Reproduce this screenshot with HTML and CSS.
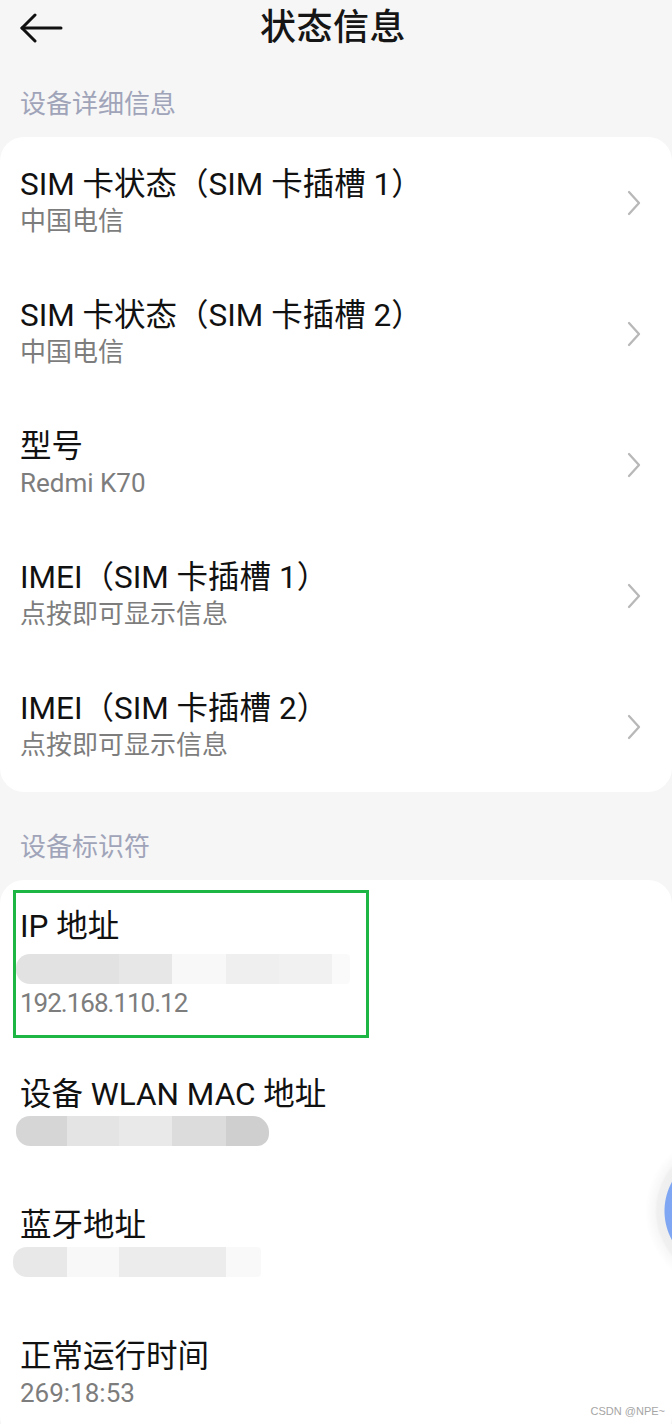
FILE: index.html
```html
<!DOCTYPE html>
<html lang="zh-CN">
<head>
<meta charset="utf-8">
<title>状态信息</title>
<link rel="stylesheet" href="styles.css">
</head>
<body>
<div class="page">
  <header class="topbar">
    <div class="back">
      <svg width="44" height="30" viewBox="0 0 44 30" fill="none" stroke="#111" stroke-width="3" stroke-linecap="round" stroke-linejoin="round">
        <path d="M3 15 H42"/>
        <path d="M16 2 L3 15 L16 28"/>
      </svg>
    </div>
    <h1 class="title">状态信息</h1>
    <div></div>
  </header>

  <div class="section-label">设备详细信息</div>
  <section class="card">
    <div class="item">
      <div class="text"><div class="item-title">SIM 卡状态（SIM 卡插槽 1）</div><div class="item-sub">中国电信</div></div>
      <svg class="chev" width="14" height="26" viewBox="0 0 14 26" fill="none" stroke="#b8b8b8" stroke-width="2.3" stroke-linecap="round" stroke-linejoin="round"><path d="M2 2 L12 13 L2 24"/></svg>
    </div>
    <div class="item">
      <div class="text"><div class="item-title">SIM 卡状态（SIM 卡插槽 2）</div><div class="item-sub">中国电信</div></div>
      <svg class="chev" width="14" height="26" viewBox="0 0 14 26" fill="none" stroke="#b8b8b8" stroke-width="2.3" stroke-linecap="round" stroke-linejoin="round"><path d="M2 2 L12 13 L2 24"/></svg>
    </div>
    <div class="item">
      <div class="text"><div class="item-title">型号</div><div class="item-sub">Redmi K70</div></div>
      <svg class="chev" width="14" height="26" viewBox="0 0 14 26" fill="none" stroke="#b8b8b8" stroke-width="2.3" stroke-linecap="round" stroke-linejoin="round"><path d="M2 2 L12 13 L2 24"/></svg>
    </div>
    <div class="item">
      <div class="text"><div class="item-title">IMEI（SIM 卡插槽 1）</div><div class="item-sub">点按即可显示信息</div></div>
      <svg class="chev" width="14" height="26" viewBox="0 0 14 26" fill="none" stroke="#b8b8b8" stroke-width="2.3" stroke-linecap="round" stroke-linejoin="round"><path d="M2 2 L12 13 L2 24"/></svg>
    </div>
    <div class="item">
      <div class="text"><div class="item-title">IMEI（SIM 卡插槽 2）</div><div class="item-sub">点按即可显示信息</div></div>
      <svg class="chev" width="14" height="26" viewBox="0 0 14 26" fill="none" stroke="#b8b8b8" stroke-width="2.3" stroke-linecap="round" stroke-linejoin="round"><path d="M2 2 L12 13 L2 24"/></svg>
    </div>
  </section>

  <div class="section-label">设备标识符</div>
  <section class="card">
    <div class="item item-ip">
      <div class="text">
        <div class="item-title">IP 地址</div>
        <div class="blur-line"><div class="blur blur-ip"></div></div>
        <div class="item-sub ip-value">192.168.110.12</div>
      </div>
      <div class="highlight"></div>
    </div>
    <div class="item">
      <div class="text">
        <div class="item-title">设备 WLAN MAC 地址</div>
        <div class="blur-line"><div class="blur blur-mac"></div></div>
      </div>
    </div>
    <div class="item">
      <div class="text">
        <div class="item-title">蓝牙地址</div>
        <div class="blur-line"><div class="blur blur-bt"></div></div>
      </div>
    </div>
    <div class="item">
      <div class="text"><div class="item-title">正常运行时间</div><div class="item-sub">269:18:53</div></div>
    </div>
  </section>
</div>
<div class="float-btn"></div>
<div class="watermark">CSDN @NPE~</div>
</body>
</html>
```

FILE: styles.css
```css
html, body {
  margin: 0;
  padding: 0;
}
body {
  width: 672px;
  height: 1424px;
  overflow: hidden;
  position: relative;
  background: #f6f6f6;
  font-family: Roboto, "Noto Sans CJK SC", sans-serif;
  color: #111;
}
.page {
  display: flex;
  flex-direction: column;
}
.topbar {
  height: 56px;
  display: grid;
  grid-template-columns: 1fr auto 1fr;
  align-items: center;
}
.back {
  padding-left: 19px;
  display: flex;
  align-items: center;
}
.title {
  margin: 0 0 0 -6px;
  font-size: 36px;
  font-weight: 500;
  line-height: 44px;
  letter-spacing: 0.5px;
  color: #151515;
}
.section-label {
  padding: 31px 20px 16px;
  font-size: 26px;
  line-height: 34px;
  color: #a0a4b9;
}
.card {
  margin: 0 0 7px;
  background: #fff;
  border-radius: 24px;
}
.item {
  position: relative;
  display: flex;
  align-items: center;
  padding: 29px 30px 30px 20px;
}
.text {
  flex: 1;
  min-width: 0;
}
.item-title {
  font-size: 31.5px;
  line-height: 38px;
  color: #111;
  white-space: nowrap;
}
.item-sub {
  font-size: 26px;
  line-height: 34px;
  color: #7d7d7d;
  white-space: nowrap;
}
.ip-value {
  letter-spacing: -1px;
}
.chev {
  margin-top: 2px;
  margin-right: 1px;
  flex: none;
}
.item-ip {
  padding-top: 28px;
  padding-bottom: 27px;
}
.blur-line {
  height: 34px;
  display: flex;
  align-items: center;
  margin-left: -4px;
}
.item-ip .blur-line {
  height: 40px;
  align-items: flex-end;
  padding-bottom: 2px;
  box-sizing: border-box;
}
.blur {
  height: 30px;
}
.blur-ip {
  width: 334px;
  border-radius: 14px 4px 4px 14px;
  background: linear-gradient(to right,
    #e2e2e2 0, #e2e2e2 103px,
    #e7e7e7 103px, #e7e7e7 156px,
    #f8f8f8 156px, #f8f8f8 210px,
    #efefef 210px, #efefef 263px,
    #f1f1f1 263px, #f1f1f1 316px,
    #fafafa 316px);
}
.blur-mac {
  width: 253px;
  border-radius: 14px 16px 12px 14px;
  background: linear-gradient(to right,
    #d6d6d6 0, #d6d6d6 51px,
    #e4e4e4 51px, #e4e4e4 103px,
    #e9e9e9 103px, #e9e9e9 156px,
    #dcdcdc 156px, #dcdcdc 210px,
    #cfcfcf 210px);
}
.blur-bt {
  width: 248px;
  margin-left: -3px;
  border-radius: 14px 4px 4px 14px;
  background: linear-gradient(to right,
    #e8e8e8 0, #e8e8e8 54px,
    #f8f8f8 54px, #f8f8f8 106px,
    #ececec 106px, #ececec 213px,
    #f9f9f9 213px);
}
.highlight {
  position: absolute;
  left: 13px;
  top: 10px;
  width: 350px;
  height: 142px;
  border: 3px solid #1db544;
}
.float-btn {
  position: absolute;
  left: 646px;
  top: 1131px;
  width: 26px;
  height: 160px;
  background: radial-gradient(circle at 79px 80px,
    #7ea6f2 0, #7ea6f2 60px,
    #eeeeee 61px, #f0f0f0 68px,
    rgba(0, 0, 0, 0.03) 70px, rgba(0, 0, 0, 0) 80px);
}
.watermark {
  position: absolute;
  right: 7px;
  bottom: 6px;
  font-family: "Liberation Sans", sans-serif;
  font-size: 11px;
  line-height: 14px;
  color: #a5a5a5;
}
```
